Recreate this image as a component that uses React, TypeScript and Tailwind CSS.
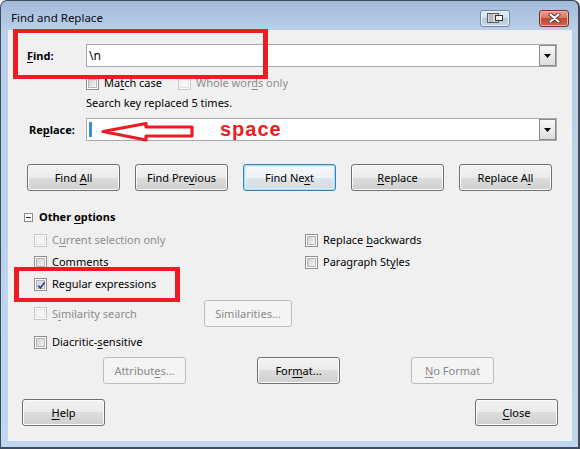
import React from "react";

type Kids = { children?: React.ReactNode };

const U = ({ children }: Kids) => (
  <span className="underline decoration-1 underline-offset-[2px]">{children}</span>
);

const Check = ({ checked = false, disabled = false }: { checked?: boolean; disabled?: boolean }) => (
  <span
    className={`relative flex h-[13px] w-[13px] shrink-0 items-center justify-center border ${
      disabled ? "border-[#c8c8c8] bg-[#fbfbfb]" : "border-[#8e8f8f] bg-white"
    }`}
  >
    <span
      className={`h-[9px] w-[9px] border ${
        disabled
          ? "border-[#e4e4e4] bg-[#f5f5f5]"
          : "border-[#b2b6bb] bg-[linear-gradient(135deg,#cdd1d6,#f6f6f6)]"
      }`}
    />
    {checked && (
      <svg className="absolute left-[1px] top-[1px]" width="11" height="11" viewBox="0 0 11 11">
        <path d="M2.2 5.6 L4.4 7.9 L8.8 2.3" fill="none" stroke="#30488a" strokeWidth="1.7" />
      </svg>
    )}
  </span>
);

const Opt = ({ checked, disabled, children }: Kids & { checked?: boolean; disabled?: boolean }) => (
  <div className={`flex items-center gap-[5px] ${disabled ? "text-[#8d8d8d]" : "text-black"}`}>
    <Check checked={checked} disabled={disabled} />
    <span>{children}</span>
  </div>
);

const Btn = ({
  w,
  disabled,
  focused,
  children,
}: Kids & { w: string; disabled?: boolean; focused?: boolean }) => (
  <div
    className={`flex h-[27px] shrink-0 items-center justify-center rounded-[3px] border ${w} ${
      disabled
        ? "border-[#b9bdc0] bg-[#f4f4f4] text-[#8a8a8a]"
        : focused
        ? "border-[#3c7fb1] bg-[linear-gradient(to_bottom,#f6f9fb_0%,#eef3f7_50%,#dfe6ec_50%,#d3dbe2_100%)] shadow-[inset_0_0_0_1px_#a9dcf6,inset_0_0_0_2px_#dcf1fb] text-black"
        : "border-[#707070] bg-[linear-gradient(to_bottom,#f2f2f2_0%,#ebebeb_50%,#dddddd_50%,#cfcfcf_100%)] shadow-[inset_0_0_0_1px_#fbfbfb] text-black"
    }`}
  >
    <span>{children}</span>
  </div>
);

const Combo = ({ children }: Kids) => (
  <div className="flex h-[23px] w-[471px] border border-[#a9a9a9] bg-white">
    <div className="flex flex-1 items-center pl-[2px] text-[12px]">{children}</div>
    <div className="flex w-[17px] items-center justify-center border border-[#8b8b8b] bg-[linear-gradient(to_bottom,#f7f7f7,#dedede)]">
      <svg width="7" height="4" viewBox="0 0 7 4">
        <path d="M0 0h7L3.5 4z" fill="#000" />
      </svg>
    </div>
  </div>
);

export default function App() {
  return (
    <div className="relative h-[449px] w-[580px] overflow-hidden bg-white font-['Noto_Sans',sans-serif] text-[11px] leading-[16px] text-black">
      <div className="flex h-[449px] w-[580px] flex-col rounded-t-[7px] border border-b-2 border-r-2 border-[#3e4c5e] bg-[linear-gradient(to_bottom,#a2bbd9_0px,#bad0ea_30px,#c0d6ee_100%)]">
        {/* title bar */}
        <div className="flex h-[29px] items-center pl-[10px] pr-[9px] pt-[5px]">
          <span className="flex-1 text-[11.5px] text-[#0a0a14]">Find and Replace</span>
          <div className="flex h-[17px] w-[30px] items-center justify-center rounded-[3px] border border-[#6f86a6] bg-[linear-gradient(to_bottom,#e4edf7_0%,#cddcee_50%,#b6cae3_50%,#c3d5ec_100%)] shadow-[inset_0_0_0_1px_#eef4fb]">
            <svg width="16" height="10" viewBox="0 0 16 10">
              <rect x="0.5" y="0.5" width="11" height="9" fill="#d8d8d8" stroke="#5a5a5a" />
              <line x1="3" y1="1" x2="3" y2="9" stroke="#9a9a9a" />
              <line x1="5" y1="1" x2="5" y2="9" stroke="#9a9a9a" />
              <rect x="8.5" y="2.5" width="7" height="5" fill="#fff" stroke="#333" />
            </svg>
          </div>
          <div className="ml-[29px] flex h-[17px] w-[30px] items-center justify-center rounded-[3px] border border-[#7e2c22] bg-[linear-gradient(to_bottom,#e3a193_0%,#d87b68_45%,#c44a33_50%,#d06450_100%)] shadow-[inset_0_0_0_1px_#eeb3a7]">
            <svg width="13" height="10" viewBox="0 0 13 10">
              <path d="M2.5 1.5 L10.5 8.5 M10.5 1.5 L2.5 8.5" stroke="#4b3a38" strokeWidth="4" strokeLinecap="round" />
              <path d="M2.5 1.5 L10.5 8.5 M10.5 1.5 L2.5 8.5" stroke="#fff" strokeWidth="2.2" strokeLinecap="round" />
            </svg>
          </div>
        </div>

        {/* frame + client */}
        <div className="flex flex-1 pb-[6px] pl-[7px] pr-[6px]">
          <div className="flex h-[411px] w-[564px] flex-col bg-[#f0f0f0]">
            <div className="mt-[14px] flex h-[23px] items-center">
              <span className="w-[78px] pl-[19px] font-bold">
                <U>F</U>ind:
              </span>
              <Combo>{"\\n"}</Combo>
            </div>

            <div className="mt-[7px] flex h-[18px] items-center pl-[78px]">
              <div className="w-[92px]">
                <Opt>
                  Ma<U>t</U>ch case
                </Opt>
              </div>
              <Opt disabled>
                Whole wor<U>d</U>s only
              </Opt>
            </div>

            <div className="mt-[3px] h-[16px] pl-[78px]">Search key replaced 5 times.</div>

            <div className="mt-[7px] flex h-[23px] items-center">
              <span className="w-[78px] pl-[21px] font-bold">
                Re<U>p</U>lace:
              </span>
              <Combo>
                <span className="h-[15px] w-[3px] bg-[#3a8ee6]" />
              </Combo>
            </div>

            <div className="mt-[23px] flex h-[27px] gap-[15px] pl-[19px]">
              <Btn w="w-[93px]">
                Find <U>A</U>ll
              </Btn>
              <Btn w="w-[93px]">
                Find Pre<U>v</U>ious
              </Btn>
              <Btn w="w-[93px]" focused>
                Find Ne<U>x</U>t
              </Btn>
              <Btn w="w-[93px]">
                <U>R</U>eplace
              </Btn>
              <Btn w="w-[93px]">
                Replace A<U>l</U>l
              </Btn>
            </div>

            <div className="mt-[18px] flex h-[16px] items-center gap-[6px] pl-[16px]">
              <span className="flex h-[9px] w-[9px] items-center justify-center border border-[#8a8a8a] bg-white">
                <span className="h-[1px] w-[5px] bg-[#2a2a2a]" />
              </span>
              <span className="font-bold">
                Other <U>o</U>ptions
              </span>
            </div>

            <div className="mt-[5px] flex h-[20px] items-center pl-[26px]">
              <div className="w-[271px]">
                <Opt disabled>
                  C<U>u</U>rrent selection only
                </Opt>
              </div>
              <Opt>
                Replace <U>b</U>ackwards
              </Opt>
            </div>
            <div className="mt-[2px] flex h-[20px] items-center pl-[26px]">
              <div className="w-[271px]">
                <Opt>Comments</Opt>
              </div>
              <Opt>
                Paragraph St<U>y</U>les
              </Opt>
            </div>
            <div className="mt-[2px] flex h-[20px] items-center pl-[26px]">
              <Opt checked>Regular expressions</Opt>
            </div>

            <div className="mt-[6px] flex h-[27px] items-center pl-[26px]">
              <div className="w-[170px]">
                <Opt disabled>
                  S<U>i</U>milarity search
                </Opt>
              </div>
              <Btn w="w-[88px]" disabled>
                Similarities...
              </Btn>
            </div>

            <div className="mt-[5px] flex h-[20px] items-center pl-[26px]">
              <Opt>
                Diacritic-<U>s</U>ensitive
              </Opt>
            </div>

            <div className="mt-[5px] flex h-[27px] gap-[71px] pl-[95px]">
              <Btn w="w-[83px]" disabled>
                Attribut<U>e</U>s...
              </Btn>
              <Btn w="w-[83px]">
                For<U>m</U>at...
              </Btn>
              <Btn w="w-[83px]" disabled>
                <U>N</U>o Format
              </Btn>
            </div>

            <div className="mt-[15px] flex h-[27px] justify-between pl-[14px] pr-[14px]">
              <Btn w="w-[83px]">
                <U>H</U>elp
              </Btn>
              <Btn w="w-[83px]">
                <U>C</U>lose
              </Btn>
            </div>
          </div>
        </div>
      </div>

      {/* red annotations drawn over the screenshot */}
      <div className="absolute left-[13px] top-[29px] h-[50px] w-[255px] border-x-[5px] border-y-[4px] border-[#ed1c24]" />
      <div className="absolute left-[14px] top-[267px] h-[35px] w-[166px] border-x-[5px] border-y-[4px] border-[#ed1c24]" />
      <svg className="absolute left-[100px] top-[120px]" width="96" height="24" viewBox="0 0 96 24">
        <path
          d="M3 11.5 L46 3.5 L46 7 L92 7 L92 16 L46 16 L46 20 Z"
          fill="#fff"
          stroke="#ed1c24"
          strokeWidth="3.2"
          strokeLinejoin="round"
        />
      </svg>
      <span className="absolute left-[220px] top-[117px] font-['Liberation_Sans',sans-serif] text-[20px] font-bold leading-[24px] tracking-[1px] text-[#ed1c24]">
        space
      </span>
    </div>
  );
}
